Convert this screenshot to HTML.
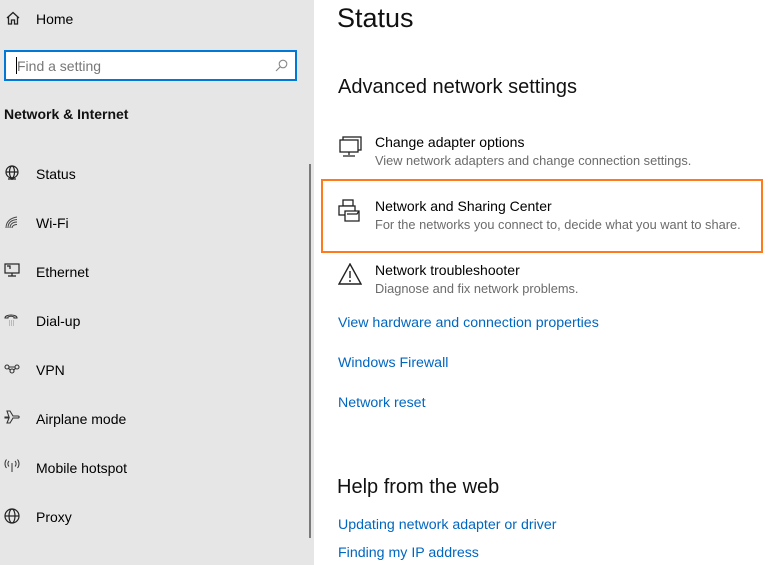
<!DOCTYPE html>
<html><head><style>
*{margin:0;padding:0;box-sizing:border-box}
body{width:768px;height:565px;overflow:hidden;background:#fff;font-family:"Liberation Sans",sans-serif;position:relative;color:#000}
.side{position:absolute;left:0;top:0;width:314px;height:565px;background:#e6e6e6}
.t{position:absolute;white-space:nowrap}
.nav{font-size:14px;left:36px}
.ic{position:absolute;left:4px}
.blue{color:#0067c0;font-size:14.2px}
.sub{color:#6b6b6b;font-size:12.8px}
.h{font-size:14px}
</style></head><body>
<div class="side">
 <svg class="ic" style="left:6px;top:11px" width="14" height="14" viewBox="0 0 14 14" fill="none" stroke="#222" stroke-width="1.3"><path d="M1 7L7 1.5L13 7M2.5 5.8V13H5.5V9H8.5V13H11.5V5.8"/></svg>
 <div class="t" style="left:36px;top:11px;font-size:14px">Home</div>
 <div style="position:absolute;left:4px;top:50px;width:293px;height:31px;border:2px solid #0078d7;background:#fff"></div>
 <div style="position:absolute;left:16px;top:57px;width:1px;height:17px;background:#000"></div>
 <div class="t" style="left:17px;top:58px;font-size:14px;color:#777">Find a setting</div>
 <svg style="position:absolute;left:275px;top:59px" width="13" height="13" viewBox="0 0 13 13" fill="none" stroke="#888" stroke-width="1.1"><circle cx="8" cy="5" r="3.8"/><path d="M5.3 7.7L1 12"/></svg>
 <div class="t" style="left:4px;top:106px;font-size:14px;font-weight:bold;color:#111">Network &amp; Internet</div>
 <svg class="ic" style="top:165px" width="16" height="16" viewBox="0 0 16 16" fill="none" stroke="#222" stroke-width="1.2"><circle cx="8" cy="7" r="6"/><ellipse cx="8" cy="7" rx="2.5" ry="6"/><path d="M2 7H14M4 14H12M8 13V15"/></svg>
 <div class="t nav" style="top:166px">Status</div>
 <svg class="ic" style="top:215px" width="16" height="14" viewBox="0 0 16 14" fill="none" stroke="#444" stroke-width="1"><path d="M2 13C2 7 6 3 13 2M4 13C4 8 7 5 13 4.5M6 13C6 9 9 7 13 7M8 13C8 11 10 9.5 13 9.5"/></svg>
 <div class="t nav" style="top:215px">Wi-Fi</div>
 <svg class="ic" style="top:263px" width="16" height="15" viewBox="0 0 16 15" fill="none" stroke="#222" stroke-width="1.2"><rect x="1" y="1" width="14" height="9"/><path d="M8 10V13M4 13H12M3 3H6V6"/></svg>
 <div class="t nav" style="top:264px">Ethernet</div>
 <svg class="ic" style="top:313px" width="14" height="14" viewBox="0 0 14 14" fill="none" stroke="#333" stroke-width="1.1"><path d="M1 5C1 1 13 1 13 5L10 5V4C8 3 6 3 4 4V5Z"/><path d="M5 8H5.5M7 8H7.5M9 8H9.5M5 10H5.5M7 10H7.5M9 10H9.5M5 12H5.5M7 12H7.5M9 12H9.5"/></svg>
 <div class="t nav" style="top:313px">Dial-up</div>
 <svg class="ic" style="top:363px" width="16" height="12" viewBox="0 0 16 12" fill="none" stroke="#333" stroke-width="1.1"><circle cx="3" cy="4" r="2"/><circle cx="13" cy="4" r="2"/><circle cx="8" cy="8" r="2"/><path d="M5 4H11M4.5 5.5L6.5 7M11.5 5.5L9.5 7"/></svg>
 <div class="t nav" style="top:362px">VPN</div>
 <svg class="ic" style="top:409px" width="16" height="16" viewBox="0 0 16 16" fill="none" stroke="#333" stroke-width="1.1"><path d="M1 8H5L3 2H6L9 7H14C15.5 7 15.5 9 14 9H9L6 14H3L5 9H1Z"/></svg>
 <div class="t nav" style="top:411px">Airplane mode</div>
 <svg class="ic" style="top:459px" width="16" height="14" viewBox="0 0 16 14" fill="none" stroke="#333" stroke-width="1"><path d="M8 4V13M5 2C3.5 3.5 3.5 6 5 7.5M11 2C12.5 3.5 12.5 6 11 7.5M2.5 0.5C0.5 3 0.5 6.5 2.5 9M13.5 0.5C15.5 3 15.5 6.5 13.5 9"/></svg>
 <div class="t nav" style="top:460px">Mobile hotspot</div>
 <svg class="ic" style="top:508px" width="16" height="16" viewBox="0 0 16 16" fill="none" stroke="#222" stroke-width="1.2"><circle cx="8" cy="8" r="7"/><ellipse cx="8" cy="8" rx="3" ry="7"/><path d="M1 8H15"/></svg>
 <div class="t nav" style="top:509px">Proxy</div>
 <div style="position:absolute;left:309px;top:164px;width:2px;height:374px;background:#7a7a7a"></div>
</div>
<div class="t" style="left:337px;top:3px;font-size:27px;color:#111">Status</div>
<div class="t" style="left:338px;top:76px;font-size:20px;color:#111">Advanced network settings</div>
<svg style="position:absolute;left:339px;top:136px" width="24" height="22" viewBox="0 0 24 22" fill="none" stroke="#222" stroke-width="1.3"><rect x="4" y="1" width="18" height="13"/><rect x="1" y="4" width="18" height="12" fill="#fff"/><path d="M10 16V19M4 20H16"/></svg>
<div class="t h" style="left:375px;top:134px">Change adapter options</div>
<div class="t sub" style="left:375px;top:153px">View network adapters and change connection settings.</div>
<div style="position:absolute;left:321px;top:179px;width:442px;height:74px;border:2px solid #ff7a1a"></div>
<svg style="position:absolute;left:337px;top:199px" width="26" height="24" viewBox="0 0 26 24" fill="none" stroke="#222" stroke-width="1.3"><rect x="6" y="1" width="10" height="6"/><rect x="2" y="7" width="16" height="9" fill="#fff"/><path d="M8 12H22V22H8Z" fill="#fff"/><path d="M10 15L20 15L22 12"/></svg>
<div class="t h" style="left:375px;top:198px">Network and Sharing Center</div>
<div class="t sub" style="left:375px;top:217px">For the networks you connect to, decide what you want to share.</div>
<svg style="position:absolute;left:338px;top:263px" width="24" height="22" viewBox="0 0 24 22" fill="none" stroke="#222" stroke-width="1.4"><path d="M12 1L23 21H1Z"/><path d="M12 8V15M12 17V19"/></svg>
<div class="t h" style="left:375px;top:262px">Network troubleshooter</div>
<div class="t sub" style="left:375px;top:281px">Diagnose and fix network problems.</div>
<div class="t blue" style="left:338px;top:315px">View hardware and connection properties</div>
<div class="t blue" style="left:338px;top:355px">Windows Firewall</div>
<div class="t blue" style="left:338px;top:395px">Network reset</div>
<div class="t" style="left:337px;top:476px;font-size:20px;color:#111">Help from the web</div>
<div class="t blue" style="left:338px;top:517px">Updating network adapter or driver</div>
<div class="t blue" style="left:338px;top:545px">Finding my IP address</div>
</body></html>
